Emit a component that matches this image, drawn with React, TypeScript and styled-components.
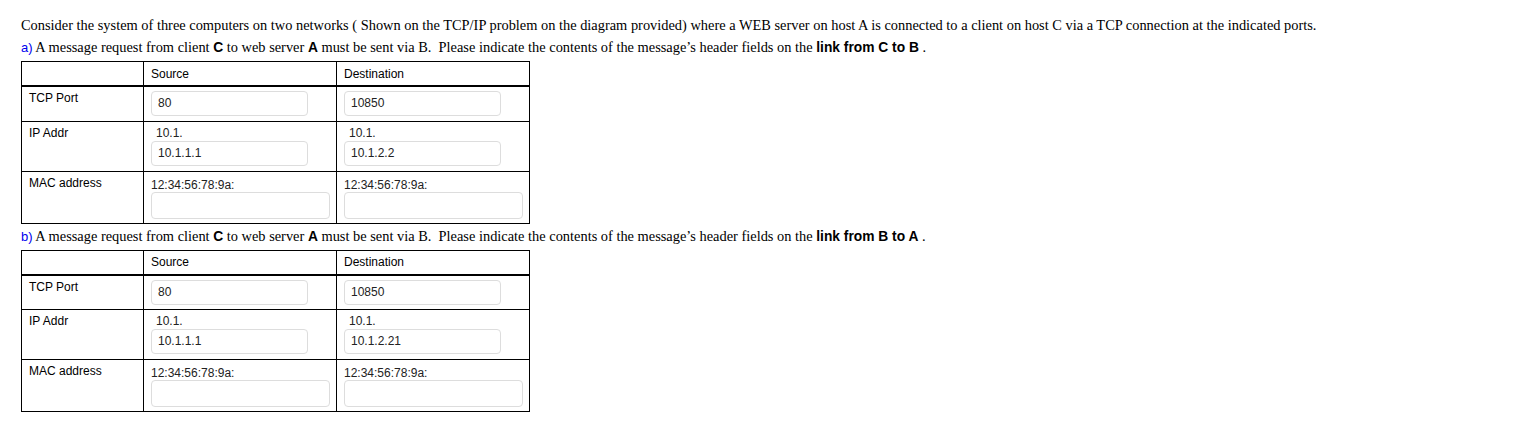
import React from "react";
import styled, {createGlobalStyle} from "styled-components";

const GlobalStyle = createGlobalStyle`
    body {
        margin: 0;
        background: #fff;
        color: #000;
        font-family: "Liberation Serif", "Times New Roman", serif;
    }
`;

const Page = styled.div`
    padding: 14px 0 0 21px;
`;

const Intro = styled.p`
    margin: 0;
    font-size: 14.4px;
    line-height: 22px;
    height: 22px;
    white-space: nowrap;
`;

const Question = styled(Intro)``;

const Tag = styled.span`
    font-family: "Liberation Sans", Arial, sans-serif;
    font-size: 13px;
    line-height: 1;
    color: #0000ee;
`;

const Strong = styled.b`
    font-family: "Liberation Sans", Arial, sans-serif;
    font-size: 13.8px;
    line-height: 1;
    font-weight: bold;
`;

const Grid = styled.table`
    border-collapse: collapse;
    width: 509px;
    margin: 3px 0 1px;
    font-family: "Liberation Sans", Arial, sans-serif;
    font-size: 12px;
    table-layout: fixed;
`;

const HeadCell = styled.th`
    border: 1px solid #000;
    border-bottom: 2px solid #000;
    height: 23px;
    padding: 0 7px;
    font-weight: normal;
    text-align: left;
    vertical-align: middle;
    line-height: 14px;
`;

const Cell = styled.td<{ $h: number }>`
    border: 1px solid #000;
    height: ${p => p.$h}px;
    padding: 4px 7px 0 7px;
    vertical-align: top;
    line-height: 14px;
    box-sizing: border-box;
`;

const Prefix = styled.div<{ $indent?: boolean }>`
    padding-left: ${p => (p.$indent ? 5 : 0)}px;
    margin-top: ${p => (p.$indent ? 0 : 2)}px;
    height: 14px;
    color: #222;
`;

const Field = styled.div<{ $w: number; $h: number; $top: number }>`
    box-sizing: border-box;
    width: ${p => p.$w}px;
    height: ${p => p.$h}px;
    margin-top: ${p => p.$top}px;
    border: 1px solid #ddd;
    border-radius: 4px;
    padding: 0 6px;
    font-size: 12px;
    line-height: ${p => p.$h - 2}px;
    color: #222;
`;

interface Row {
    src: string;
    dst: string;
}

interface Part {
    tag: string;
    link: string;
    dstIp: string;
}

const parts: Part[] = [
    {tag: "a)", link: "link from C to B", dstIp: "10.1.2.2"},
    {tag: "b)", link: "link from B to A", dstIp: "10.1.2.21"},
];

function HeaderTable({dstIp}: { dstIp: string }) {
    const port: Row = {src: "80", dst: "10850"};
    return (
        <Grid>
            <colgroup>
                <col style={{width: 122}}/>
                <col style={{width: 193}}/>
                <col style={{width: 193}}/>
            </colgroup>
            <thead>
            <tr>
                <HeadCell/>
                <HeadCell>Source</HeadCell>
                <HeadCell>Destination</HeadCell>
            </tr>
            </thead>
            <tbody>
            <tr>
                <Cell $h={35}>TCP Port</Cell>
                <Cell $h={35}><Field $w={157} $h={25} $top={0}>{port.src}</Field></Cell>
                <Cell $h={35}><Field $w={157} $h={25} $top={0}>{port.dst}</Field></Cell>
            </tr>
            <tr>
                <Cell $h={50}>IP Addr</Cell>
                <Cell $h={50}>
                    <Prefix $indent>10.1.</Prefix>
                    <Field $w={157} $h={25} $top={1}>10.1.1.1</Field>
                </Cell>
                <Cell $h={50}>
                    <Prefix $indent>10.1.</Prefix>
                    <Field $w={157} $h={25} $top={1}>{dstIp}</Field>
                </Cell>
            </tr>
            <tr>
                <Cell $h={52}>MAC address</Cell>
                <Cell $h={52}>
                    <Prefix>12:34:56:78:9a:</Prefix>
                    <Field $w={179} $h={27} $top={0}/>
                </Cell>
                <Cell $h={52}>
                    <Prefix>12:34:56:78:9a:</Prefix>
                    <Field $w={179} $h={27} $top={0}/>
                </Cell>
            </tr>
            </tbody>
        </Grid>
    );
}

function App() {
    return (
        <Page>
            <GlobalStyle/>
            <Intro>
                Consider the system of three computers on two networks ( Shown on the TCP/IP problem on the diagram
                provided) where a WEB server on host A is connected to a client on host C via a TCP connection at the
                indicated ports.
            </Intro>
            {parts.map(part => (
                <React.Fragment key={part.tag}>
                    <Question>
                        <Tag>{part.tag}</Tag> A message request from client <Strong>C</Strong> to web server{" "}
                        <Strong>A</Strong> must be sent via B.&nbsp; Please indicate the contents of the message’s
                        header fields on the <Strong>{part.link}</Strong> .
                    </Question>
                    <HeaderTable dstIp={part.dstIp}/>
                </React.Fragment>
            ))}
        </Page>
    );
}

export default App;
